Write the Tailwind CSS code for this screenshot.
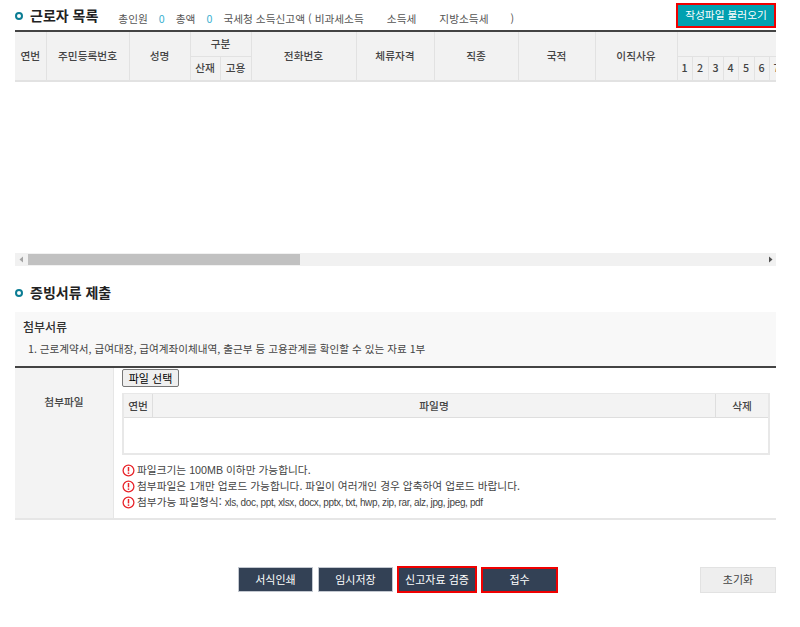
<!DOCTYPE html>
<html lang="ko">
<head>
<meta charset="UTF-8">
<title>근로자 목록</title>
<script src="https://cdn.jsdelivr.net/npm/@tailwindcss/browser@4"></script>
</head>
<body class="bg-white text-[#333] font-['Noto_Sans_CJK_KR','Noto_Sans',sans-serif] text-[10.7px]">
<div class="w-[800px] h-[627px] overflow-hidden pl-[15px] pr-[24px]">

  <!-- 근로자 목록 -->
  <div class="h-[30px] flex items-start relative">
    <span class="w-[8px] h-[8px] mt-[12px] rounded-full border-2 border-[#0b7d94]"></span>
    <h2 class="ml-[7px] mt-[5px] text-[14px] leading-[20px] font-bold text-[#222]">근로자 목록</h2>
    <div class="ml-[20px] mt-[11px] flex leading-[16px] text-[#555] whitespace-nowrap">
      <span>총인원</span><span class="ml-[11px] text-[#3ab0d0]">0</span>
      <span class="ml-[11px]">총액</span><span class="ml-[11px] text-[#3ab0d0]">0</span>
      <span class="ml-[11px]">국세청 소득신고액 ( 비과세소득</span>
      <span class="ml-[23px]">소득세</span>
      <span class="ml-[23px]">지방소득세</span>
      <span class="ml-[22px]">)</span>
    </div>
    <button class="absolute right-0 top-[3px] w-[100px] h-[25px] bg-[#00a0b0] border-2 border-[#f00000] text-white">작성파일 불러오기</button>
  </div>

  <div class="h-[223px] overflow-hidden border-t-2 border-[#444]">
    <table class="table-fixed border-collapse w-[769px] text-center font-medium text-[#444]">
      <colgroup>
        <col class="w-[31px]"><col class="w-[83px]"><col class="w-[61px]"><col class="w-[30px]"><col class="w-[31px]">
        <col class="w-[105px]"><col class="w-[78px]"><col class="w-[84px]"><col class="w-[77px]"><col class="w-[82px]">
        <col class="w-[15px]"><col class="w-[16px]"><col class="w-[15px]"><col class="w-[15px]"><col class="w-[16px]"><col class="w-[15px]"><col class="w-[15px]">
      </colgroup>
      <thead class="bg-[#f2f2f2]">
        <tr class="h-[24px]">
          <th rowspan="2" class="font-medium border-r border-b-2 border-[#e2e2e2]">연번</th>
          <th rowspan="2" class="font-medium border-x border-b-2 border-[#e2e2e2]">주민등록번호</th>
          <th rowspan="2" class="font-medium border-x border-b-2 border-[#e2e2e2]">성명</th>
          <th colspan="2" class="font-medium border-x border-b border-[#e2e2e2]">구분</th>
          <th rowspan="2" class="font-medium border-x border-b-2 border-[#e2e2e2]">전화번호</th>
          <th rowspan="2" class="font-medium border-x border-b-2 border-[#e2e2e2]">체류자격</th>
          <th rowspan="2" class="font-medium border-x border-b-2 border-[#e2e2e2]">직종</th>
          <th rowspan="2" class="font-medium border-x border-b-2 border-[#e2e2e2]">국적</th>
          <th rowspan="2" class="font-medium border-x border-b-2 border-[#e2e2e2]">이직사유</th>
          <th colspan="7" class="font-medium border-x border-b border-[#e2e2e2]"></th>
        </tr>
        <tr class="h-[25px]">
          <th class="font-medium border-x border-b-2 border-[#e2e2e2]">산재</th>
          <th class="font-medium border-x border-b-2 border-[#e2e2e2]">고용</th>
          <th class="font-medium border-x border-b-2 border-[#e2e2e2]">1</th>
          <th class="font-medium border-x border-b-2 border-[#e2e2e2]">2</th>
          <th class="font-medium border-x border-b-2 border-[#e2e2e2]">3</th>
          <th class="font-medium border-x border-b-2 border-[#e2e2e2]">4</th>
          <th class="font-medium border-x border-b-2 border-[#e2e2e2]">5</th>
          <th class="font-medium border-x border-b-2 border-[#e2e2e2]">6</th>
          <th class="font-medium border-x border-b-2 border-[#e2e2e2]">7</th>
        </tr>
      </thead>
    </table>
  </div>

  <!-- 가로 스크롤바 -->
  <div class="h-[13px] bg-[#f1f1f1] flex items-center relative">
    <svg class="absolute left-[4px]" width="5" height="7" viewBox="0 0 5 7"><path d="M4 0.5v6L0.5 3.5z" fill="#a3a3a3"/></svg>
    <div class="ml-[13px] w-[272px] h-[11px] bg-[#c1c1c1]"></div>
    <svg class="absolute right-[3px]" width="5" height="7" viewBox="0 0 5 7"><path d="M1 0.5v6L4.5 3.5z" fill="#505050"/></svg>
  </div>

  <!-- 증빙서류 제출 -->
  <div class="h-[46px] flex items-start">
    <span class="w-[8px] h-[8px] mt-[23px] rounded-full border-2 border-[#0b7d94]"></span>
    <h2 class="ml-[7px] mt-[16px] text-[14px] leading-[20px] font-bold text-[#222]">증빙서류 제출</h2>
  </div>

  <div class="h-[56px] bg-[#f8f8f8] border-b-2 border-[#444] pl-[8px] pt-[6px]">
    <p class="text-[12px] leading-[18px] font-medium text-[#333]">첨부서류</p>
    <p class="mt-[5px] ml-[5px] leading-[16px] text-[10.6px] text-[#444]">1. 근로계약서, 급여대장, 급여계좌이체내역, 출근부 등 고용관계를 확인할 수 있는 자료 1부</p>
  </div>

  <div class="h-[152px] flex border-b-2 border-[#e6e6e6]">
    <div class="w-[99px] bg-[#f3f3f3] border-r border-[#e6e6e6] flex justify-center pt-[26px] font-medium text-[#444] leading-[16px]">첨부파일</div>
    <div class="flex-1 pl-[8px]">
      <button class="mt-[1px] block w-[57px] h-[18px] bg-[#efefef] border border-[#767676] rounded-[2px] text-[11px] leading-[14px] text-black">파일 선택</button>
      <div class="mt-[6px] w-[648px] h-[62px] border-2 border-t border-[#e8e8e8]">
        <div class="h-[24px] bg-[#f3f3f3] border-b border-[#dedede] flex items-center text-center font-medium text-[#444]">
          <div class="w-[29px] border-r border-[#dedede] leading-[23px]">연번</div>
          <div class="flex-1 leading-[23px]">파일명</div>
          <div class="w-[53px] border-l border-[#dedede] leading-[23px]">삭제</div>
        </div>
      </div>
      <ul class="mt-[7px] leading-[16px] text-[#444] whitespace-nowrap">
        <li class="flex items-center">
          <svg class="mr-[2px]" width="13" height="13" viewBox="0 0 13 13"><circle cx="6.5" cy="6.5" r="5.4" fill="#fff" stroke="#e8252b" stroke-width="1.3"/><path d="M6.5 3v4.4" stroke="#e8252b" stroke-width="1.5"/><path d="M6.5 8.4v1.5" stroke="#e8252b" stroke-width="1.5"/></svg>
          <span>파일크기는 <span class="font-['Liberation_Sans',sans-serif]">100MB</span> 이하만 가능합니다.</span>
        </li>
        <li class="flex items-center">
          <svg class="mr-[2px]" width="13" height="13" viewBox="0 0 13 13"><circle cx="6.5" cy="6.5" r="5.4" fill="#fff" stroke="#e8252b" stroke-width="1.3"/><path d="M6.5 3v4.4" stroke="#e8252b" stroke-width="1.5"/><path d="M6.5 8.4v1.5" stroke="#e8252b" stroke-width="1.5"/></svg>
          <span>첨부파일은 1개만 업로드 가능합니다. 파일이 여러개인 경우 압축하여 업로드 바랍니다.</span>
        </li>
        <li class="flex items-center">
          <svg class="mr-[2px]" width="13" height="13" viewBox="0 0 13 13"><circle cx="6.5" cy="6.5" r="5.4" fill="#fff" stroke="#e8252b" stroke-width="1.3"/><path d="M6.5 3v4.4" stroke="#e8252b" stroke-width="1.5"/><path d="M6.5 8.4v1.5" stroke="#e8252b" stroke-width="1.5"/></svg>
          <span>첨부가능 파일형식: <span class="font-['Liberation_Sans',sans-serif] text-[10px] tracking-[-0.36px]">xls, doc, ppt, xlsx, docx, pptx, txt, hwp, zip, rar, alz, jpg, jpeg, pdf</span></span>
        </li>
      </ul>
    </div>
  </div>

  <!-- 하단 버튼 -->
  <div class="mt-[46px] flex items-center text-[11px]">
    <button class="ml-[223px] w-[75px] h-[25px] bg-[#334155] border border-[#c3c8d0] text-white">서식인쇄</button>
    <button class="ml-[5px] w-[75px] h-[25px] bg-[#334155] border border-[#c3c8d0] text-white">임시저장</button>
    <button class="ml-[4px] w-[80px] h-[27px] bg-[#334155] border-2 border-[#f00000] text-white">신고자료 검증</button>
    <button class="ml-[4px] w-[77px] h-[26px] bg-[#334155] border-2 border-[#f00000] text-white">접수</button>
    <button class="ml-[142px] w-[76px] h-[26px] bg-[#eeeeee] border border-[#e2e2e2] text-[#444]">초기화</button>
  </div>
</div>
</body>
</html>
